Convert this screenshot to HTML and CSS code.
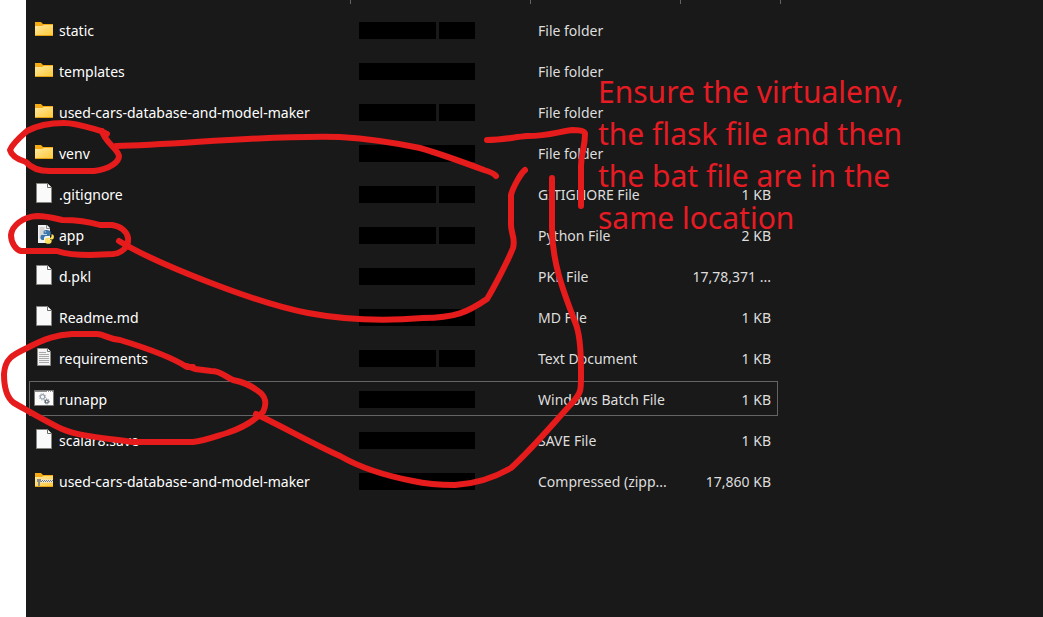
FILE: index.html
```html
<!DOCTYPE html>
<html lang="en">
<head>
    <meta charset="UTF-8">
    <meta name="viewport" content="width=device-width, initial-scale=1.0">
    <title>Project files</title>
    <link rel="stylesheet" href="styles.css">
</head>
<body>
    <!-- shared icons -->
    <svg class="sprite" aria-hidden="true">
        <defs>
            <linearGradient id="folderFill" x1="0" y1="0" x2="1" y2="1">
                <stop offset="0" stop-color="#ffe8a0"/>
                <stop offset="1" stop-color="#ffc938"/>
            </linearGradient>
        </defs>
        <symbol id="folder" viewBox="0 0 20 20">
            <path d="M1 3h6l2 2h10v12H1z" fill="#f5ab14"/>
            <path d="M1 7h7l2-1h9v10H1z" fill="url(#folderFill)"/>
            <path d="M1 16h18v1H1z" fill="#e3a012"/>
        </symbol>
        <symbol id="file" viewBox="0 0 20 20">
            <path d="M2.5 .5h11l4 4v15h-15z" fill="#fafafa" stroke="#85857f"/>
            <path d="M13.5 .5v4h4" fill="#fff" stroke="#6b6b66"/>
        </symbol>
        <symbol id="python" viewBox="0 0 20 20">
            <path d="M4 1h9l3 3v15H4z" fill="#f2f2f2"/>
            <path d="M12.5 1v3.5H16" fill="none" stroke="#888"/>
            <path d="M5.5 4h5M5.5 6h5M5.5 8h4M5.5 10h3M5.5 12h2M5.5 14h2" stroke="#b5b5b5"/>
            <path d="M12.500 6c-3 0-3 1.300-3 2.500V10h3.500v.7H8.500C7 10.700 6.500 12 6.500 13.500S7 16 8.500 16H10v-2c0-1.200 1-2 2-2h3c1 0 1.700-.8 1.700-1.700V8.500c0-1.500-1.200-2.500-4.200-2.500z" fill="#3c77ac"/>
            <path d="M17.500 10.200V12c0 1.200-.8 2-1.800 2h-3c-1 0-1.700.8-1.700 1.700v2c0 1.500 1.500 2.100 3.300 2.100 2 0 3.300-.8 3.300-2.300V16H14v-.6h4c1.300 0 1.900-1 1.900-2.600s-.6-2.600-2.400-2.600z" fill="#ffe05c"/>
            <circle cx="11.2" cy="7.800" r=".6" fill="#fff"/>
        </symbol>
        <symbol id="text" viewBox="0 0 20 20">
            <path d="M3.5 1.5h10l3 3v14h-13z" fill="#f4f4f4" stroke="#8a8a86"/>
            <path d="M13.5 1.5v3h3" fill="#fff" stroke="#77776f"/>
            <path d="M5 5.5h7M5 7.5h10M5 9.5h10M5 11.5h10M5 13.5h10M5 15.5h10" stroke="#aaa"/>
        </symbol>
        <symbol id="batch" viewBox="0 0 20 20">
            <path d="M.5 2.5h19v15H.5z" fill="#fbfbfb" stroke="#777"/>
            <path d="M1 3h18v1H1z" fill="#8d8d8d"/>
            <path d="M13 3.5h1M15 3.5h1M17 3.5h1" stroke="#fff"/>
            <circle cx="8.5" cy="8.8" r="2.2" fill="none" stroke="#9aa4ad" stroke-width="1.2"/>
            <circle cx="8.5" cy="8.8" r="3.200" fill="none" stroke="#9aa4ad" stroke-dasharray="1.2 1.3"/>
            <circle cx="12.8" cy="13.5" r="1.500" fill="none" stroke="#5d666e" stroke-width="1.2"/>
            <circle cx="12.8" cy="13.5" r="2.400" fill="none" stroke="#5d666e" stroke-dasharray="1 .88"/>
        </symbol>
        <symbol id="zip" viewBox="0 0 20 20">
            <path d="M1 3h6l2 2h10v12H1z" fill="#f5ab14"/>
            <path d="M1 7h7l2-1h9v10H1z" fill="url(#folderFill)"/>
            <path d="M1 16h18v1H1z" fill="#e3a012"/>
            <path d="M4 11h15" stroke="#e9e9e4" stroke-width="3"/>
            <path d="M4 10.5h15" stroke="#777" stroke-dasharray="1 1"/>
            <path d="M5 11.5h14" stroke="#777" stroke-dasharray="1 1"/>
            <path d="M3 9h4v3H6v4H4v-4H3z" fill="#8c8c88"/>
        </symbol>
    </svg>

    <main class="explorer">
        <table class="files">
            <colgroup>
                <col class="col-name">
                <col class="col-date">
                <col class="col-type">
                <col class="col-size">
            </colgroup>
            <thead>
                <tr>
                    <th><span class="divider"></span></th>
                    <th><span class="divider"></span></th>
                    <th><span class="divider"></span></th>
                    <th><span class="divider"></span></th>
                </tr>
            </thead>
            <tbody>
                <tr>
                    <td><div class="name"><svg class="icon"><use href="#folder"/></svg>static</div></td>
                    <td><div class="date"><span class="bar"></span><span class="bar time"></span></div></td>
                    <td>File folder</td>
                    <td class="size"></td>
                </tr>
                <tr>
                    <td><div class="name"><svg class="icon"><use href="#folder"/></svg>templates</div></td>
                    <td><div class="date"><span class="bar"></span></div></td>
                    <td>File folder</td>
                    <td class="size"></td>
                </tr>
                <tr>
                    <td><div class="name"><svg class="icon"><use href="#folder"/></svg>used-cars-database-and-model-maker</div></td>
                    <td><div class="date"><span class="bar"></span><span class="bar time"></span></div></td>
                    <td>File folder</td>
                    <td class="size"></td>
                </tr>
                <tr>
                    <td><div class="name"><svg class="icon"><use href="#folder"/></svg>venv</div></td>
                    <td><div class="date"><span class="bar"></span></div></td>
                    <td>File folder</td>
                    <td class="size"></td>
                </tr>
                <tr>
                    <td><div class="name"><svg class="icon"><use href="#file"/></svg>.gitignore</div></td>
                    <td><div class="date"><span class="bar"></span><span class="bar time"></span></div></td>
                    <td>GITIGNORE File</td>
                    <td class="size">1 KB</td>
                </tr>
                <tr>
                    <td><div class="name"><svg class="icon"><use href="#python"/></svg>app</div></td>
                    <td><div class="date"><span class="bar"></span><span class="bar time"></span></div></td>
                    <td>Python File</td>
                    <td class="size">2 KB</td>
                </tr>
                <tr>
                    <td><div class="name"><svg class="icon"><use href="#file"/></svg>d.pkl</div></td>
                    <td><div class="date"><span class="bar"></span></div></td>
                    <td>PKL File</td>
                    <td class="size">17,78,371 ...</td>
                </tr>
                <tr>
                    <td><div class="name"><svg class="icon"><use href="#file"/></svg>Readme.md</div></td>
                    <td><div class="date"><span class="bar"></span></div></td>
                    <td>MD File</td>
                    <td class="size">1 KB</td>
                </tr>
                <tr>
                    <td><div class="name"><svg class="icon"><use href="#text"/></svg>requirements</div></td>
                    <td><div class="date"><span class="bar"></span><span class="bar time"></span></div></td>
                    <td>Text Document</td>
                    <td class="size">1 KB</td>
                </tr>
                <tr class="focused">
                    <td><div class="name"><svg class="icon"><use href="#batch"/></svg>runapp</div></td>
                    <td><div class="date"><span class="bar"></span></div></td>
                    <td>Windows Batch File</td>
                    <td class="size">1 KB</td>
                </tr>
                <tr>
                    <td><div class="name"><svg class="icon"><use href="#file"/></svg>scalar8.save</div></td>
                    <td><div class="date"><span class="bar"></span></div></td>
                    <td>SAVE File</td>
                    <td class="size">1 KB</td>
                </tr>
                <tr>
                    <td><div class="name"><svg class="icon"><use href="#zip"/></svg>used-cars-database-and-model-maker</div></td>
                    <td><div class="date"><span class="bar"></span></div></td>
                    <td>Compressed (zipp...</td>
                    <td class="size">17,860 KB</td>
                </tr>
            </tbody>
        </table>
    </main>

    <!-- red pen marks over the list -->
    <svg class="ink" width="600" height="500" viewBox="0 0 600 500" aria-hidden="true">
        <!-- venv -->
        <path d="M107 134L101 131C87 127 76 123 64 123C50 123 38 125 27 131C20 137 12 145 10 150C11 154 16 159 26 162C31 168 38 171 50 171L94 171C110 169 119 162 119 156C118 149 104 141 102 131"/>
        <path d="M116 146C180 145 260 135 340 137C372 139 396 143 420 148C444 155 468 164 484 170Q494 173 496 176"/>
        <path d="M487 140C504 140 514 137 527 136C550 136 560 131 573 130C581 130 585 131 585 134C585 148 581 153 581 166L581 206"/>
        <!-- app -->
        <path d="M100 225C90 222 77 220 62 220C54 218 47 216 37 216C22 217 12 226 11 235C11 243 16 250 21 251L57 251C66 254 77 255 90 255L113 254C122 253 129 247 128 238C127 231 120 226 112 225L100 225"/>
        <path d="M119 241C155 263 255 303 308 313C345 320 385 321 423 318C455 318 468 312 487 299C492 291 507 263 513 248C516 237 510 233 511 222L511 195C513 187 521 173 525 170"/>
        <!-- runapp -->
        <path d="M193 367L187 367C170 356 143 347 120 340C108 339 103 334 97 334L72 334C57 335 46 338 27 348C12 355 5 359 4 374C4 388 7 398 14 403C25 409 47 422 62 429C81 437 107 438 133 442L193 442C204 441 214 437 227 433C242 428 255 420 263 412C267 404 266 396 258 391C249 384 242 382 233 380C224 376 221 371 211 371L195 369L187 366"/>
        <path d="M256 414C285 428 315 445 340 456C366 471 392 477 413 481C426 484 437 485 455 485C472 484 492 479 511 468C535 446 556 420 573 402C582 391 581 390 581 370C581 350 580 333 575 322C564 293 552 263 552 228L552 178"/>
    </svg>
    <p class="note">Ensure the virtualenv,<br>the flask file and then<br>the bat file are in the<br>same location</p>
</body>
</html>
```

FILE: styles.css
```css
* {
    box-sizing: border-box;
    margin: 0;
    padding: 0;
}

body {
    position: relative;
    min-height: 100vh;
    padding-left: 26px;
    background-color: #fff;
    font-family: "Noto Sans", "Open Sans", sans-serif;
    font-size: 14px;
    line-height: 20px;
}

.sprite {
    position: absolute;
    width: 0;
    height: 0;
}

.explorer {
    min-height: 100vh;
    background-color: #191919;
    color: #dedede;
}

.files {
    width: 755px;
    table-layout: fixed;
    border-collapse: collapse;
}

.col-name {
    width: 325px;
}

.col-date {
    width: 180px;
}

.col-type {
    width: 150px;
}

th {
    height: 9px;
    vertical-align: top;
}

.divider {
    display: block;
    height: 4px;
    border-right: 1px solid #636363;
}

td {
    height: 41px;
    padding: 2px 10px 0 7px;
    vertical-align: middle;
    white-space: nowrap;
}

.name {
    display: flex;
    align-items: center;
    gap: 5px;
    padding-left: 1px;
    color: #fff;
}

.icon {
    width: 20px;
    height: 20px;
    margin-bottom: 4px;
}

.date {
    display: flex;
    gap: 3px;
    width: 116px;
    margin-left: 1px;
}

.bar {
    flex: 1;
    height: 17px;
    background-color: #000;
}

.bar.time {
    flex: 0 0 36px;
}

.size {
    text-align: right;
}

.focused {
    outline: 1px solid #646464;
    outline-offset: -4px;
    border-radius: 2px;
}

.ink {
    position: absolute;
    top: 0;
    left: 0;
    fill: none;
    stroke: #e61b1b;
    stroke-width: 6;
    stroke-linecap: round;
    stroke-linejoin: round;
}

.note {
    position: absolute;
    top: 71px;
    left: 598px;
    color: #e61b23;
    font-size: 30px;
    line-height: 42px;
    white-space: nowrap;
}
```
